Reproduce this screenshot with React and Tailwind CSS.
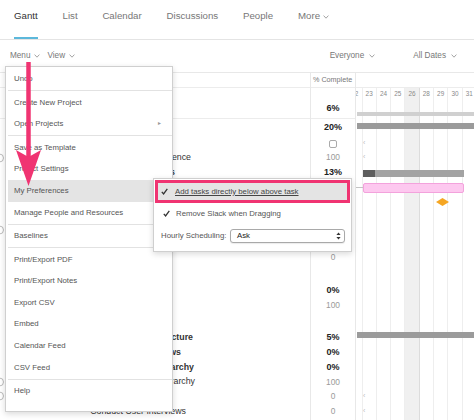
import React from "react";

const Chevron = ({ color = "#9a9a9a" }) => (
  <svg width="6" height="4" viewBox="0 0 6 4" className="shrink-0">
    <polyline points="0.6,0.6 3,3.2 5.4,0.6" fill="none" stroke={color} strokeWidth="0.9" />
  </svg>
);

const Check = () => (
  <svg width="7" height="7" viewBox="0 0 7 7" className="shrink-0">
    <path d="M0.8 3.8 L2.6 5.9 L6.3 0.8" fill="none" stroke="#333" strokeWidth="1.3" />
  </svg>
);

const tabs = ["Gantt", "List", "Calendar", "Discussions", "People"];

const dates = ["22", "23", "24", "25", "26", "28", "29", "30", "31"];

const rows = [
  { h: 19, pct: "6%", b: true, bar: "light", line: true },
  { h: 18, pct: "20%", b: true, bar: "dark" },
  { h: 13, chk: true, lt: true },
  { h: 15, pct: "100", name: "Understand User Experience", end: 191, lt: true, circle: true },
  { h: 15, pct: "13%", b: true, name: "Research Goals", nb: true, end: 175, bar: "progress" },
  { h: 15, bar: "pink" },
  { h: 15, diamond: true },
  { h: 40, circle: true },
  { h: 15, pct: "0" },
  { h: 18 },
  { h: 15, pct: "0%", b: true },
  { h: 15, pct: "100" },
  { h: 18 },
  { h: 14, pct: "5%", b: true, name: "Information Architecture", nb: true, end: 193, bar: "dark5" },
  { h: 15, pct: "0%", b: true, name: "User Interviews", nb: true, end: 181 },
  { h: 15, pct: "0%", b: true, name: "Site Hierarchy", nb: true, end: 194 },
  { h: 14, pct: "100", name: "Define Hierarchy", end: 195, circle: true },
  { h: 14, pct: "0", lt: true, circle: true },
  { h: 17, pct: "0", lt: true, name: "Conduct User Interviews", end: 186 },
];

const menu = [
  "Undo",
  "-",
  "Create New Project",
  "Open Projects>",
  "-",
  "Save as Template",
  "Project Settings",
  "My Preferences*",
  "Manage People and Resources",
  "-",
  "Baselines",
  "-",
  "Print/Export PDF",
  "Print/Export Notes",
  "Export CSV",
  "Embed",
  "Calendar Feed",
  "CSV Feed",
  "-",
  "Help",
];

function GanttBar({ r }) {
  return (
    <>
      {r.bar === "light" && <div className="absolute left-[1px] right-0 top-[12px] h-[4px] bg-[#d0d0d0]" />}
      {r.bar === "dark" && <div className="absolute left-[1px] right-0 top-[4px] h-[6px] bg-[#9b9b9b]" />}
      {r.bar === "dark5" && <div className="absolute left-[1px] right-0 top-[1px] h-[6px] bg-[#9b9b9b]" />}
      {r.bar === "progress" && (
        <div className="absolute left-[7px] w-[101px] top-[5px] h-[7px] bg-[#a3a3a3] flex">
          <div className="w-[12px] h-full bg-[#5e5e5e]" />
        </div>
      )}
      {r.bar === "pink" && (
        <>
          <div className="absolute left-0 w-[7px] top-[7px] h-px bg-[#c4c4c4]" />
          <div className="absolute left-[7px] w-[101px] top-[2.5px] h-[10px] bg-[#fdc8ef] border border-[#f3a2dc] rounded-[2px]" />
        </>
      )}
      {r.diamond && (
        <svg className="absolute left-[80px] top-[3px]" width="13" height="8" viewBox="0 0 13 8">
          <polygon points="6.5,0 13,4 6.5,8 0,4" fill="#f5a623" />
        </svg>
      )}
      {r.lt && (
        <span className="absolute left-[7px] top-0 h-full flex items-center text-[7px] text-[#bdbdbd]">‹</span>
      )}
    </>
  );
}

export default function App() {
  return (
    <div className="relative w-[474px] h-[420px] overflow-hidden bg-white font-['Liberation_Sans',Arial,sans-serif]">
      {/* Top nav */}
      <div className="h-[40px] border-b border-[#e4e4e4] flex pl-[14px] gap-[24.8px] text-[9.7px]">
        {tabs.map((t, i) => (
          <div
            key={t}
            className={
              "flex items-center pb-[4px] border-b-2 " +
              (i === 0 ? "border-[#5cb8db] text-[#333]" : "border-transparent text-[#777]")
            }
          >
            {t}
          </div>
        ))}
        <div className="flex items-center gap-[3px] pb-[4px] border-b-2 border-transparent text-[#777]">
          More <Chevron />
        </div>
      </div>

      {/* Toolbar */}
      <div className="h-[32px] flex items-center justify-between pl-[10px] pr-[17px] text-[8.2px] text-[#777]">
        <div className="flex items-center">
          <span>Menu</span>
          <span className="ml-[4px]"><Chevron /></span>
          <span className="ml-[7px]">View</span>
          <span className="ml-[4px]"><Chevron /></span>
        </div>
        <div className="flex items-center">
          <span>Everyone</span>
          <span className="ml-[5px]"><Chevron /></span>
          <span className="ml-[38px]">All Dates</span>
          <span className="ml-[5px]"><Chevron /></span>
        </div>
      </div>

      {/* Table */}
      <div className="flex h-[348px] border-t border-[#e8e8e8]">
        {/* names */}
        <div className="w-[310px] shrink-0 flex flex-col">
          <div className="h-[15px] border-b border-[#ececec]" />
          <div className="h-[12px]" />
          {rows.map((r, i) => (
            <div
              key={i}
              style={{ height: r.h, paddingRight: r.end ? 310 - r.end : 0 }}
              className={"relative flex items-center justify-end " + (r.line ? "border-b border-[#ececec]" : "")}
            >
              {r.circle && (
                <div className="absolute left-[-5px] top-1/2 -translate-y-1/2 w-[9px] h-[9px] rounded-full border border-[#bbb]" />
              )}
              {r.name && (
                <span className={"whitespace-nowrap text-[8.8px] text-[#333] " + (r.nb ? "font-bold" : "")}>
                  {r.name}
                </span>
              )}
            </div>
          ))}
        </div>

        {/* pct */}
        <div className="w-[45px] shrink-0 border-l border-[#e8e8e8] flex flex-col">
          <div className="h-[15px] border-b border-[#ececec] flex items-center pl-[2px] text-[7.2px] text-[#777] whitespace-nowrap">
            % Complete
          </div>
          <div className="h-[12px]" />
          {rows.map((r, i) => (
            <div
              key={i}
              style={{ height: r.h }}
              className={"flex items-center justify-center " + (r.line ? "border-b border-[#ececec]" : "")}
            >
              {r.chk && <div className="w-[8px] h-[8px] rounded-[2px] border border-[#aaa]" />}
              {r.pct && (
                <span className={r.b ? "text-[9px] font-bold text-[#222]" : "text-[8.4px] text-[#9a9a9a]"}>
                  {r.pct}
                </span>
              )}
            </div>
          ))}
        </div>

        {/* gantt */}
        <div className="flex-1 border-l border-[#e8e8e8] flex flex-col overflow-hidden">
          <div className="h-[15px] shrink-0 border-b border-[#ececec]" />
          <div className="relative flex-1">
            <div className="flex h-full ml-[-7.8px]">
              {dates.map((d) => (
                <div
                  key={d}
                  className={
                    "w-[14.3px] shrink-0 h-full border-r " +
                    (d === "26" ? "bg-[#f0f0f0] border-[#dcdcdc]" : "border-[#eeeeee]")
                  }
                >
                  <div className="h-[12px] flex items-center justify-center text-[6.4px] text-[#8a8a8a]">{d}</div>
                </div>
              ))}
            </div>
            <div className="absolute left-0 right-0 top-[12px] flex flex-col">
              {rows.map((r, i) => (
                <div key={i} style={{ height: r.h }} className="relative">
                  <GanttBar r={r} />
                </div>
              ))}
            </div>
          </div>
        </div>
      </div>

      {/* Menu dropdown */}
      <div className="absolute left-[5px] top-[66px] w-[168px] bg-white border border-[#cfcfcf] shadow-[0_2px_6px_rgba(0,0,0,0.15)] pt-px pb-[9px] pl-[2px] text-[7.8px] text-[#555]">
        {menu.map((m, i) => {
          if (m === "-") return <div key={i} className="h-px bg-[#e2e2e2] my-[0.5px]" />;
          const sub = m.endsWith(">");
          const hi = m.endsWith("*");
          const label = sub || hi ? m.slice(0, -1) : m;
          return (
            <div
              key={i}
              className={"h-[21.6px] flex items-center pl-[6px] pr-[10px] " + (hi ? "bg-[#e4e4e4]" : "")}
            >
              <span className="flex-1 whitespace-nowrap">{label}</span>
              {sub && <span className="text-[5px] text-[#999]">►</span>}
            </div>
          );
        })}
      </div>

      {/* Submenu */}
      <div className="absolute left-[153px] top-[178px] w-[199px] h-[74px] bg-white border border-[#cfcfcf] shadow-[0_2px_6px_rgba(0,0,0,0.15)] p-px text-[7.8px] text-[#555]">
        <div className="h-[23px] border-[3px] border-[#f03472] bg-[#e4e4e4] flex items-center pl-[3px]">
          <Check />
          <span className="ml-[7px] underline text-[#444] whitespace-nowrap">Add tasks directly below above task</span>
        </div>
        <div className="h-[21px] flex items-center pl-[8px]">
          <Check />
          <span className="ml-[6px] whitespace-nowrap">Remove Slack when Dragging</span>
        </div>
        <div className="h-[23px] flex items-center pl-[6px]">
          <span className="w-[69px] whitespace-nowrap">Hourly Scheduling:</span>
          <div className="w-[115px] h-[14px] border border-[#a9a9a9] rounded-[3px] bg-white shadow-[0_1px_1px_rgba(0,0,0,0.08)] flex items-center pl-[6px] pr-[3px]">
            <span className="flex-1 text-[7.8px] text-[#222]">Ask</span>
            <svg width="5" height="8" viewBox="0 0 5 8">
              <polygon points="2.5,0.5 4.6,3 0.4,3" fill="#333" />
              <polygon points="0.4,5 4.6,5 2.5,7.5" fill="#333" />
            </svg>
          </div>
        </div>
      </div>

      {/* Pink arrow */}
      <svg className="absolute left-0 top-0 pointer-events-none" width="60" height="200" viewBox="0 0 60 200">
        <line x1="28.5" y1="62" x2="28.5" y2="160" stroke="#f03472" strokeWidth="4.5" />
        <polygon points="16,150 28.5,157 41,150 28.5,186" fill="#f03472" />
      </svg>
    </div>
  );
}
